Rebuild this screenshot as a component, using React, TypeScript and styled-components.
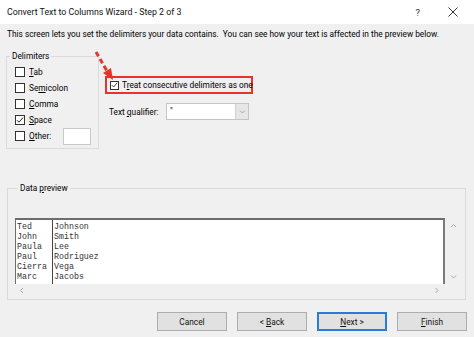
import React from "react";
import styled, { createGlobalStyle } from "styled-components";

const Global = createGlobalStyle`
  html, body { margin: 0; padding: 0; background: #f0f0f0; }
  body { font-family: Roboto, "Noto Sans", "Liberation Sans", sans-serif; }
`;

const UI = `Roboto, "Noto Sans", "Liberation Sans", sans-serif`;

const Dialog = styled.div`
  width: 474px;
  height: 337px;
  background: #f0f0f0;
  display: flex;
  flex-direction: column;
  font-family: ${UI};
  font-size: 8.3px;
  color: #000;
  overflow: hidden;
  position: relative;
`;

const TitleBar = styled.div`
  height: 24px;
  flex: none;
  background: #fff;
  display: flex;
  align-items: center;
  padding: 0 16px 0 7px;
  font-size: 8.8px;
  color: #111;
`;

const TitleText = styled.div`
  flex: 1;
`;

const TitleButtons = styled.div`
  display: flex;
  align-items: center;
  gap: 28px;
  color: #333;
`;

const Help = styled.span`
  font-size: 9.5px;
`;

const Content = styled.div`
  padding: 0 7px 0 6px;
  display: flex;
  flex-direction: column;
`;

const Description = styled.div`
  margin: 4px 0 0 1px;
  line-height: 12px;
  white-space: nowrap;
`;

const TopRow = styled.div`
  display: flex;
  margin-top: 10px;
`;

const Group = styled.fieldset<{ $w: number; $h: number }>`
  margin: 0;
  padding: 0;
  border: 1px solid #dadada;
  border-radius: 0;
  width: ${(p) => p.$w}px;
  height: ${(p) => p.$h}px;
  box-sizing: border-box;
  min-inline-size: 0;
  flex: none;
`;

const Legend = styled.legend`
  margin-left: 3px;
  padding: 0 2px;
  line-height: 12px;
`;

const DelimList = styled.div`
  display: flex;
  flex-direction: column;
  padding: 2px 0 0 8px;
`;

const OptRow = styled.label`
  display: flex;
  align-items: center;
  height: 16px;
  gap: 4px;
`;

const Box = styled.span<{ $size: number }>`
  width: ${(p) => p.$size}px;
  height: ${(p) => p.$size}px;
  box-sizing: border-box;
  border: 1px solid #333;
  background: #fff;
  display: flex;
  align-items: center;
  justify-content: center;
  flex: none;
`;

const U = styled.span`
  text-decoration: underline;
  text-underline-offset: 1px;
`;

const SmallInput = styled.div`
  width: 28px;
  height: 17px;
  box-sizing: border-box;
  background: #fff;
  border: 1px solid #c9c9c9;
  margin-left: auto;
  margin-right: 7px;
`;

const RightCol = styled.div`
  display: flex;
  flex-direction: column;
  margin-left: 6px;
  padding-top: 26px;
`;

const Highlight = styled.label`
  width: 148px;
  height: 18px;
  box-sizing: border-box;
  border: 2px solid #e2362b;
  display: flex;
  align-items: center;
  gap: 3px;
  padding-left: 3px;
  white-space: nowrap;
`;

const QualifierRow = styled.div`
  display: flex;
  align-items: center;
  margin-top: 9px;
  padding-left: 4px;
`;

const QualLabel = styled.span`
  width: 57px;
  flex: none;
`;

const Select = styled.div`
  width: 83px;
  height: 17px;
  box-sizing: border-box;
  background: #fff;
  border: 1px solid #c4c4c4;
  display: flex;
  align-items: stretch;
`;

const SelectValue = styled.span`
  flex: 1;
  padding-left: 3px;
  line-height: 15px;
`;

const SelectArrow = styled.span`
  width: 12px;
  background: #e6e6e6;
  border-left: 1px solid #d0d0d0;
  display: flex;
  align-items: center;
  justify-content: center;
`;

const PreviewGroup = styled(Group)`
  margin: 33px 0 0 1px;
  padding: 0 0 0 7px;
`;

const PreviewFrame = styled.div`
  margin-top: 24px;
  width: 446px;
  display: flex;
  flex-direction: column;
`;

const PreviewTop = styled.div`
  display: flex;
  height: 66px;
`;

const DataArea = styled.div`
  width: 430px;
  box-sizing: border-box;
  background: #fff;
  border-top: 2px solid #6d6d6d;
  border-left: 1px solid #6d6d6d;
  border-right: 2px solid #7a7a7a;
  display: flex;
  font-family: "Liberation Mono", "DejaVu Sans Mono", monospace;
  font-size: 8.3px;
  color: #333;
`;

const DataCol = styled.div<{ $w?: number; $sep?: boolean }>`
  width: ${(p) => (p.$w ? `${p.$w}px` : "auto")};
  flex: ${(p) => (p.$w ? "none" : "1")};
  border-right: ${(p) => (p.$sep ? "1px solid #444" : "none")};
  padding: 2px 0 0 1px;
  line-height: 10px;
  display: flex;
  flex-direction: column;
`;

const VScroll = styled.div`
  width: 16px;
  display: flex;
  flex-direction: column;
  align-items: center;
  justify-content: space-between;
  padding: 5px 0 4px;
  box-sizing: border-box;
`;

const HScroll = styled.div`
  height: 12px;
  width: 430px;
  display: flex;
  align-items: center;
  justify-content: space-between;
  padding: 0 5px 0 4px;
  box-sizing: border-box;
`;

const ButtonRow = styled.div`
  display: flex;
  justify-content: flex-end;
  gap: 10px;
  margin-top: 12px;
`;

const Button = styled.div<{ $primary?: boolean }>`
  width: 70px;
  height: 19px;
  box-sizing: border-box;
  background: #e1e1e1;
  border: ${(p) => (p.$primary ? "2px solid #2a7bd3" : "1px solid #adadad")};
  display: flex;
  align-items: center;
  justify-content: center;
  color: #111;
  white-space: pre;
`;

const Overlay = styled.svg`
  position: absolute;
  left: 90px;
  top: 46px;
  pointer-events: none;
`;

const Chevron = ({ dir }: { dir: "up" | "down" | "left" | "right" }) => {
  const d = {
    up: "M1 4 L3.5 1.5 L6 4",
    down: "M1 1.5 L3.5 4 L6 1.5",
    left: "M4 1 L1.5 3.5 L4 6",
    right: "M1.5 1 L4 3.5 L1.5 6",
  }[dir];
  const horiz = dir === "left" || dir === "right";
  return (
    <svg width={horiz ? 6 : 7} height={horiz ? 7 : 6} viewBox={horiz ? "0 0 6 7" : "0 0 7 6"}>
      <path d={d} fill="none" stroke="#a6a6a6" strokeWidth="1" />
    </svg>
  );
};

const Check = () => (
  <svg width="8" height="8" viewBox="0 0 8 8">
    <path d="M1 4.2 L3 6.2 L7 1.5" fill="none" stroke="#222" strokeWidth="1" />
  </svg>
);

const Checkbox = ({ checked, size = 10 }: { checked?: boolean; size?: number }) => (
  <Box $size={size}>{checked ? <Check /> : null}</Box>
);

const first = ["Ted", "John", "Paula", "Paul", "Cierra", "Marc"];
const last = ["Johnson", "Smith", "Lee", "Rodriguez", "Vega", "Jacobs"];

export default function App() {
  return (
    <Dialog>
      <Global />
      <TitleBar>
        <TitleText>Convert Text to Columns Wizard - Step 2 of 3</TitleText>
        <TitleButtons>
          <Help>?</Help>
          <svg width="10" height="10" viewBox="0 0 10 10">
            <path d="M0.5 0.5 L9.5 9.5 M9.5 0.5 L0.5 9.5" stroke="#333" strokeWidth="1" />
          </svg>
        </TitleButtons>
      </TitleBar>
      <Content>
        <Description>
          This screen lets you set the delimiters your data contains.&nbsp; You can see how your text is affected in the preview below.
        </Description>
        <TopRow>
          <Group $w={93} $h={99}>
            <Legend>Delimiters</Legend>
            <DelimList>
              <OptRow>
                <Checkbox />
                <span><U>T</U>ab</span>
              </OptRow>
              <OptRow>
                <Checkbox />
                <span>Se<U>m</U>icolon</span>
              </OptRow>
              <OptRow>
                <Checkbox />
                <span><U>C</U>omma</span>
              </OptRow>
              <OptRow>
                <Checkbox checked />
                <span><U>S</U>pace</span>
              </OptRow>
              <OptRow>
                <Checkbox />
                <span><U>O</U>ther:</span>
                <SmallInput />
              </OptRow>
            </DelimList>
          </Group>
          <RightCol>
            <Highlight>
              <Checkbox checked size={9} />
              <span>T<U>r</U>eat consecutive delimiters as one</span>
            </Highlight>
            <QualifierRow>
              <QualLabel>Text <U>q</U>ualifier:</QualLabel>
              <Select>
                <SelectValue>"</SelectValue>
                <SelectArrow>
                  <Chevron dir="down" />
                </SelectArrow>
              </Select>
            </QualifierRow>
          </RightCol>
        </TopRow>
        <PreviewGroup $w={459} $h={118}>
          <Legend>Data <U>p</U>review</Legend>
          <PreviewFrame>
            <PreviewTop>
              <DataArea>
                <DataCol $w={35} $sep>
                  {first.map((f) => (
                    <span key={f}>{f}</span>
                  ))}
                </DataCol>
                <DataCol>
                  {last.map((l) => (
                    <span key={l}>{l}</span>
                  ))}
                </DataCol>
              </DataArea>
              <VScroll>
                <Chevron dir="up" />
                <Chevron dir="down" />
              </VScroll>
            </PreviewTop>
            <HScroll>
              <Chevron dir="left" />
              <Chevron dir="right" />
            </HScroll>
          </PreviewFrame>
        </PreviewGroup>
        <ButtonRow>
          <Button>Cancel</Button>
          <Button>
            <span>&lt; <U>B</U>ack</span>
          </Button>
          <Button $primary>
            <span><U>N</U>ext &gt;</span>
          </Button>
          <Button>
            <span><U>F</U>inish</span>
          </Button>
        </ButtonRow>
      </Content>
      <Overlay width="30" height="40" viewBox="0 0 30 40">
        <path d="M6 6 L17 25" stroke="#e2362b" strokeWidth="3" strokeDasharray="5 3" fill="none" />
        <path d="M13 27 L23 34 L21 22 Z" fill="#e2362b" />
      </Overlay>
    </Dialog>
  );
}
